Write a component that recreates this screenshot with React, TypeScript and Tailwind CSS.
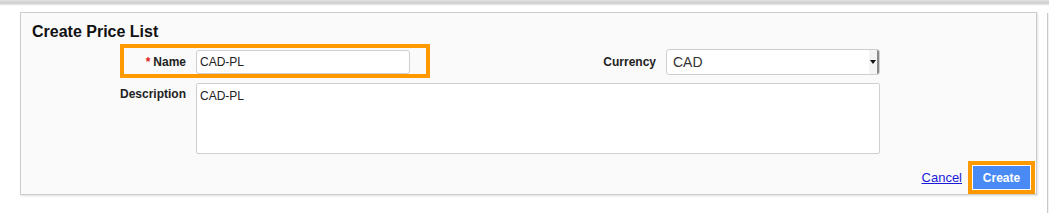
export default function App() {
  return (
    <div className="w-[1049px] h-[213px] bg-white overflow-hidden font-['Liberation_Sans',Arial,sans-serif]">
      {/* top edge */}
      <div className="h-[6px] bg-linear-to-b from-[#e2e2e2] via-[#cdcdcd] to-white" />

      <div className="flex">
        <div className="ml-[20px] mt-[6px] w-[1017px] h-[183px] border border-[#cccccc] bg-[#fafafa] shadow-[1px_1px_2px_rgba(0,0,0,0.12)] flex flex-col">
          <h2 className="pl-[11px] pt-[9px] text-[16px] leading-[19px] font-bold text-[#111]">Create Price List</h2>

          <div className="pl-[99px] mt-[8px]">
            {/* row 1 */}
            <div className="flex items-center h-[26px]">
              <div className="relative flex items-center">
                <label className="w-[66px] text-right text-[12px] leading-[14px] font-bold text-[#222]">
                  <span className="text-[#e02020] mr-[3px]">*</span>Name
                </label>
                <input
                  readOnly
                  value="CAD-PL"
                  className="ml-[10px] w-[214px] h-[24px] px-[3px] border border-[#cfcfcf] rounded-[3px] bg-white text-[12px] text-[#222] outline-none"
                />
                <div className="pointer-events-none absolute -top-[6px] left-0 w-[310px] h-[34px] border-4 border-[#ff9900]" />
              </div>

              <label className="w-[246px] text-right text-[12px] leading-[14px] font-bold text-[#222]">Currency</label>
              <div className="ml-[10px] w-[214px] h-[26px] flex items-center border border-[#cfcfcf] rounded-[3px] bg-white">
                <span className="flex-1 pl-[6px] text-[14px] text-[#333]">CAD</span>
                <div className="w-[10px] h-full flex items-center justify-center bg-[#f4f4f4] border-r-2 border-[#8a8a8a] rounded-r-[2px]">
                  <svg width="6" height="4" viewBox="0 0 6 4">
                    <path d="M0 0h6L3 4z" fill="#111" />
                  </svg>
                </div>
              </div>
            </div>

            {/* row 2 */}
            <div className="flex items-start mt-[8px]">
              <label className="w-[66px] pt-[4px] text-right text-[12px] leading-[14px] font-bold text-[#222]">Description</label>
              <textarea
                readOnly
                value="CAD-PL"
                className="ml-[10px] w-[684px] h-[71px] px-[3px] pt-[5px] resize-none border border-[#cfcfcf] rounded-[2px] bg-white text-[12px] leading-[14px] text-[#222] outline-none"
              />
            </div>
          </div>

          {/* actions */}
          <div className="mt-auto flex items-center justify-end pr-[1px]">
            <a href="#" className="text-[13px] text-[#1a1adb] underline mr-[6px]">Cancel</a>
            <div className="border-4 border-[#ff9900]">
              <button className="w-[59px] h-[25px] border border-white bg-[#4a8af4] text-white text-[12px] font-bold">
                Create
              </button>
            </div>
          </div>
        </div>

        <div className="ml-[10px] mt-[7px] w-[2px] h-[210px] border-l border-[#c8c8c8] bg-[#f0f0f0]" />
      </div>
    </div>
  );
}
